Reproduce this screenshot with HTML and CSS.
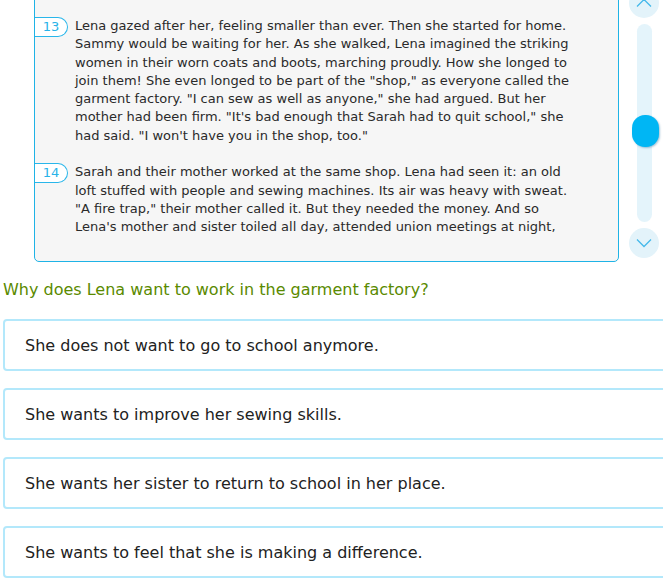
FILE: index.html
```html
<!DOCTYPE html>
<html lang="en">
<head>
<meta charset="utf-8">
<title>Reading question</title>
<link rel="stylesheet" href="styles.css">
</head>
<body>
<div class="reader">
  <div class="passage">
    <div class="para">
      <span class="num">13</span>
      <p class="text">Lena gazed after her, feeling smaller than ever. Then she started for home. Sammy would be waiting for her. As she walked, Lena imagined the striking women in their worn coats and boots, marching proudly. How she longed to join them! She even longed to be part of the "shop," as everyone called the garment factory. "I can sew as well as anyone," she had argued. But her mother had been firm. "It's bad enough that Sarah had to quit school," she had said. "I won't have you in the shop, too."</p>
    </div>
    <div class="para">
      <span class="num">14</span>
      <p class="text">Sarah and their mother worked at the same shop. Lena had seen it: an old loft stuffed with people and sewing machines. Its air was heavy with sweat. "A fire trap," their mother called it. But they needed the money. And so Lena's mother and sister toiled all day, attended union meetings at night,</p>
    </div>
  </div>
  <div class="scroller">
    <button class="scroll-btn" aria-label="Scroll up">
      <svg width="16" height="10" viewBox="0 0 16 10"><path d="M1 8.5 L8 1.5 L15 8.5" fill="none" stroke="#45b8ea" stroke-width="1.3"/></svg>
    </button>
    <div class="track"><div class="thumb"></div></div>
    <button class="scroll-btn" aria-label="Scroll down">
      <svg width="16" height="10" viewBox="0 0 16 10"><path d="M1 1.5 L8 8.5 L15 1.5" fill="none" stroke="#45b8ea" stroke-width="1.3"/></svg>
    </button>
  </div>
</div>
<p class="question">Why does Lena want to work in the garment factory?</p>
<div class="options">
  <div class="option">She does not want to go to school anymore.</div>
  <div class="option">She wants to improve her sewing skills.</div>
  <div class="option">She wants her sister to return to school in her place.</div>
  <div class="option">She wants to feel that she is making a difference.</div>
</div>
</body>
</html>
```
FILE: styles.css
```css
html, body {
  margin: 0;
  padding: 0;
  background: #ffffff;
  overflow: hidden;
}
body {
  font-family: "DejaVu Sans", Verdana, sans-serif;
  color: #222222;
  width: 663px;
  height: 585px;
}
.reader {
  display: flex;
  align-items: flex-start;
  margin-top: -20px;
  padding-left: 34px;
}
.passage {
  width: 583px;
  height: 244px;
  box-sizing: content-box;
  border: 1px solid #1fb3e6;
  border-radius: 0 0 5px 5px;
  background: #f6f6f6;
  padding: 36px 0 0 0;
  overflow: hidden;
}
.para {
  display: flex;
  align-items: flex-start;
  margin-bottom: 18.4px;
}
.num {
  flex: none;
  width: 32px;
  height: 18px;
  margin-top: -0.5px;
  border: 1px solid #29b6ea;
  border-left: none;
  border-radius: 0 10px 10px 0;
  color: #29b3e8;
  font-size: 13px;
  line-height: 18px;
  text-align: center;
  background: #ffffff;
}
.text {
  margin: 0 0 0 7px;
  width: 505px;
  font-size: 13px;
  line-height: 18.3px;
  color: #2a2a2a;
}
.scroller {
  margin-top: 8px;
  margin-left: 10px;
  width: 30px;
  display: flex;
  flex-direction: column;
  align-items: center;
  gap: 6px;
}
.scroll-btn {
  width: 30px;
  height: 30px;
  border: none;
  border-radius: 50%;
  background: #e3f3fa;
  padding: 0;
  display: flex;
  align-items: center;
  justify-content: center;
}
.track {
  position: relative;
  width: 15px;
  height: 198px;
  border-radius: 8px;
  background: #e4f4fb;
}
.thumb {
  position: absolute;
  top: 91px;
  left: -5px;
  width: 27px;
  height: 32px;
  border-radius: 13px;
  background: #00b6f4;
  box-shadow: 1px 1px 2px rgba(0, 90, 140, 0.35);
}
.question {
  margin: 19px 0 0 3px;
  font-size: 16px;
  line-height: 18px;
  color: #5a8a00;
}
.options {
  margin: 20px 0 0 3px;
  width: 665px;
  display: flex;
  flex-direction: column;
  gap: 17px;
}
.option {
  height: 48px;
  border: 2px solid #b3e8fb;
  border-radius: 4px;
  padding-left: 20px;
  display: flex;
  align-items: center;
  font-size: 16px;
  color: #222222;
}
```
